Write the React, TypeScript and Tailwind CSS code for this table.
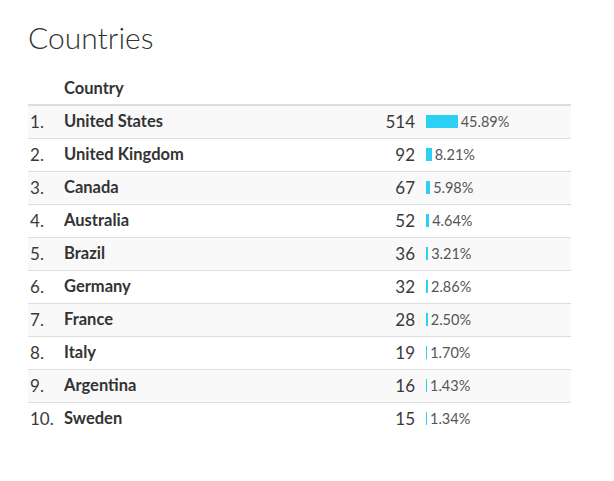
const rows = [
  { name: 'United States', count: 514, pct: 45.89 },
  { name: 'United Kingdom', count: 92, pct: 8.21 },
  { name: 'Canada', count: 67, pct: 5.98 },
  { name: 'Australia', count: 52, pct: 4.64 },
  { name: 'Brazil', count: 36, pct: 3.21 },
  { name: 'Germany', count: 32, pct: 2.86 },
  { name: 'France', count: 28, pct: 2.5 },
  { name: 'Italy', count: 19, pct: 1.7 },
  { name: 'Argentina', count: 16, pct: 1.43 },
  { name: 'Sweden', count: 15, pct: 1.34 },
]

export default function App() {
  return (
    <div className="w-[614px] h-[481px] bg-white px-[28px] pt-[17px] text-[#333]" style={{ fontFamily: 'Lato, "Open Sans", sans-serif' }}>
      <h1 className="text-[30px] font-light leading-[40px] text-[#333]">Countries</h1>
      <table className="mt-[16px] w-[543px] border-collapse">
        <thead>
          <tr className="border-b-2 border-[#ddd]">
            <th className="w-[36px]"></th>
            <th className="text-left text-[16.5px] font-bold h-[32px] align-middle">Country</th>
            <th></th>
            <th className="w-[156px]"></th>
          </tr>
        </thead>
        <tbody>
          {rows.map((r, i) => (
            <tr
              key={r.name}
              className={`h-[33px] ${i < rows.length - 1 ? 'border-b border-[#ddd]' : ''} ${i % 2 === 0 ? 'bg-[#f9f9f9]' : 'bg-white'}`}
            >
              <td className="pl-[2px] text-[17px] text-[#3a3a3a] align-middle">{i + 1}.</td>
              <td className="text-[16.5px] font-bold align-middle">{r.name}</td>
              <td className="text-right text-[17px] text-[#3a3a3a] align-middle">{r.count}</td>
              <td className="pl-[11px] align-middle">
                <div className="flex items-center gap-[3px]">
                  <div className="h-[13px] bg-[#2dd0f5]" style={{ width: `${Math.max(1, r.pct * 0.69)}px` }}></div>
                  <span className="text-[14.5px] text-[#555]">{r.pct.toFixed(2)}%</span>
                </div>
              </td>
            </tr>
          ))}
        </tbody>
      </table>
    </div>
  )
}
